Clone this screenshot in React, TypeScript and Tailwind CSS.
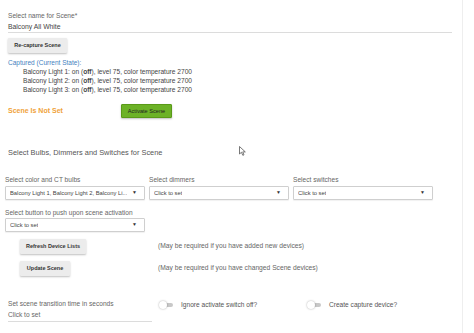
import React from "react"

const font = { fontFamily: '"Liberation Sans", Arial, sans-serif' }

const Select: React.FC<{ value: string }> = ({ value }) => (
  <div className="flex h-[14px] w-[140px] items-center justify-between rounded-[1px] border border-[#cfcfcf] bg-white pl-[4px] pr-[7px] text-[5.8px] text-[#444] shadow-[0_1px_1px_rgba(0,0,0,0.06)]">
    <span className="truncate">{value}</span>
    <span className="text-[5px] text-[#333]">▼</span>
  </div>
)

const Field: React.FC<{ label: string; value: string }> = ({ label, value }) => (
  <div className="flex w-[140px] flex-col">
    <div className="h-[10px] text-[6.6px] leading-[10px] text-[#666]">{label}</div>
    <div className="mt-[1px]">
      <Select value={value} />
    </div>
  </div>
)

const GrayButton: React.FC<{ label: string; width: string }> = ({ label, width }) => (
  <div
    className={`flex h-[15px] ${width} items-center justify-center rounded-[1px] bg-[#ececec] text-[5.5px] font-bold text-[#333] shadow-[0_1px_2px_rgba(0,0,0,0.25)]`}
  >
    {label}
  </div>
)

const Toggle: React.FC<{ label: string }> = ({ label }) => (
  <div className="flex items-center">
    <div className="relative h-[8px] w-[16px]">
      <div className="absolute left-[2px] top-[2px] h-[4px] w-[12px] rounded-full bg-[#c8c8c8]" />
      <div className="absolute left-0 top-0 h-[8px] w-[8px] rounded-full bg-white shadow-[0_0_2px_rgba(0,0,0,0.35)]" />
    </div>
    <span className="ml-[6px] text-[6.6px] text-[#555]">{label}</span>
  </div>
)

export default function App() {
  return (
    <div className="relative h-[333px] w-[474px] overflow-hidden bg-white" style={font}>
      <div className="h-[333px] w-[463px] border-r border-[#eeeeee]">
        {/* scene name */}
        <div className="ml-[8px] w-[444px] border-b border-[#dcdcdc] pt-[11px] pb-[1px]">
          <div className="h-[9px] text-[6.6px] leading-[9px] text-[#666]">Select name for Scene*</div>
          <div className="mt-[2px] h-[9px] text-[6.8px] leading-[9px] text-[#444]">Balcony All White</div>
        </div>

        <div className="ml-[8px] mt-[5px]">
          <GrayButton label="Re-capture Scene" width="w-[59px]" />
        </div>

        <div className="ml-[8px] mt-[5px] h-[9px] text-[6.5px] leading-[9px] text-[#3f7fc0]">Captured (Current State):</div>
        <div className="ml-[23px] text-[6.6px] leading-[9px] text-[#444]">
          <div>Balcony Light 1: on (<b>off</b>), level 75, color temperature 2700</div>
          <div>Balcony Light 2: on (<b>off</b>), level 75, color temperature 2700</div>
          <div>Balcony Light 3: on (<b>off</b>), level 75, color temperature 2700</div>
        </div>

        <div className="ml-[8px] mt-[10px] flex h-[14px] items-center">
          <span className="w-[113px] text-[7px] font-bold text-[#f0a23a]">Scene Is Not Set</span>
          <div className="flex h-[14px] w-[51px] items-center justify-center rounded-[1px] border border-[#5a9a18] bg-[#6cb226] text-[5.6px] text-[#222] shadow-[0_1px_2px_rgba(0,0,0,0.25)]">
            Activate Scene
          </div>
        </div>

        <div className="ml-[8px] mt-[29px] h-[11px] text-[7.4px] leading-[11px] text-[#555]">
          Select Bulbs, Dimmers and Switches for Scene
        </div>

        <div className="ml-[5px] mt-[17px] flex gap-[4px]">
          <Field label="Select color and CT bulbs" value="Balcony Light 1, Balcony Light 2, Balcony Li..." />
          <Field label="Select dimmers" value="Click to set" />
          <Field label="Select switches" value="Click to set" />
        </div>

        <div className="ml-[5px] mt-[8px] w-[200px]">
          <div className="h-[10px] text-[6.6px] leading-[10px] text-[#666]">Select button to push upon scene activation</div>
          <div className="mt-0">
            <Select value="Click to set" />
          </div>
        </div>

        <div className="ml-[20px] mt-[7px] flex items-center">
          <div className="w-[138px]">
            <GrayButton label="Refresh Device Lists" width="w-[66px]" />
          </div>
          <span className="text-[6.7px] text-[#666]">(May be required if you have added new devices)</span>
        </div>

        <div className="ml-[20px] mt-[6px] flex h-[16px] items-center">
          <div className="w-[138px]">
            <GrayButton label="Update Scene" width="w-[50px]" />
          </div>
          <span className="text-[6.7px] text-[#666]">(May be required if you have changed Scene devices)</span>
        </div>

        <div className="ml-[8px] mt-[23px] flex items-start">
          <div className="w-[144px] border-b border-[#dcdcdc] pb-[1px]">
            <div className="h-[10px] text-[6.6px] leading-[10px] text-[#666]">Set scene transition time in seconds</div>
            <div className="mt-[1px] h-[10px] text-[6.6px] leading-[10px] text-[#666]">Click to set</div>
          </div>
          <div className="ml-[7px] mt-[1px] w-[148px]">
            <Toggle label="Ignore activate switch off?" />
          </div>
          <div className="mt-[1px]">
            <Toggle label="Create capture device?" />
          </div>
        </div>
      </div>

      {/* mouse pointer */}
      <svg className="absolute left-[239px] top-[146px]" width="7" height="10" viewBox="0 0 7 10">
        <path d="M0.5 0.5 L0.5 8 L2.4 6.3 L3.8 9.3 L5 8.8 L3.7 5.9 L6.3 5.9 Z" fill="#fff" stroke="#555" strokeWidth="0.8" />
      </svg>
    </div>
  )
}
